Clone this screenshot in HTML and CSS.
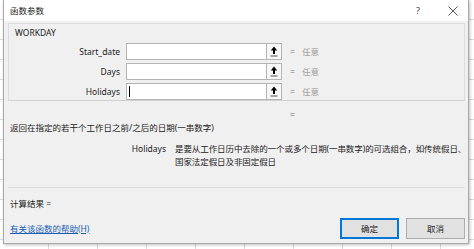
FILE: index.html
```html
<!DOCTYPE html>
<html lang="zh-CN">
<head>
<meta charset="utf-8">
<title>函数参数</title>
<link rel="stylesheet" href="styles.css">
</head>
<body>
<div class="dialog">
  <div class="titlebar">
    <span class="title">函数参数</span>
    <span class="help">?</span>
    <span class="close">
      <svg width="10" height="10" viewBox="0 0 10 10"><path d="M0.5 0.5 L9.5 9.5 M9.5 0.5 L0.5 9.5" stroke="#444" stroke-width="0.9" fill="none"/></svg>
    </span>
  </div>
  <div class="body">
    <div class="group">
      <div class="fname">WORKDAY</div>
      <div class="row">
        <span class="label">Start_date</span>
        <span class="input"></span>
        <span class="pick"><svg width="14" height="15" viewBox="0 0 14 15"><path d="M7 2.5 L10.2 6.5 L8 6.5 L8 10 L6 10 L6 6.5 L3.8 6.5 Z" fill="#000"/><rect x="3.5" y="11.5" width="7" height="1" fill="#555"/></svg></span>
        <span class="eq">=</span>
        <span class="any">任意</span>
      </div>
      <div class="row">
        <span class="label">Days</span>
        <span class="input"></span>
        <span class="pick"><svg width="14" height="15" viewBox="0 0 14 15"><path d="M7 2.5 L10.2 6.5 L8 6.5 L8 10 L6 10 L6 6.5 L3.8 6.5 Z" fill="#000"/><rect x="3.5" y="11.5" width="7" height="1" fill="#555"/></svg></span>
        <span class="eq">=</span>
        <span class="any">任意</span>
      </div>
      <div class="row">
        <span class="label">Holidays</span>
        <span class="input"><span class="caret"></span></span>
        <span class="pick"><svg width="14" height="15" viewBox="0 0 14 15"><path d="M7 2.5 L10.2 6.5 L8 6.5 L8 10 L6 10 L6 6.5 L3.8 6.5 Z" fill="#000"/><rect x="3.5" y="11.5" width="7" height="1" fill="#555"/></svg></span>
        <span class="eq">=</span>
        <span class="any">任意</span>
      </div>
    </div>
    <div class="result-eq">=</div>
    <div class="desc">返回在指定的若干个工作日之前/之后的日期(一串数字)</div>
    <div class="argdesc">
      <span class="argname">Holidays</span>
      <span class="argtext">是要从工作日历中去除的一个或多个日期(一串数字)的可选组合，如传统假日、<br>国家法定假日及非固定假日</span>
    </div>
    <div class="sep"></div>
    <div class="calc">计算结果 =</div>
    <div class="footer">
      <a class="helplink" href="#">有关该函数的帮助(H)</a>
      <div class="buttons">
        <span class="btn default">确定</span>
        <span class="btn">取消</span>
      </div>
    </div>
  </div>
</div>
</body>
</html>
```

FILE: styles.css
```css
html, body {
  margin: 0;
  padding: 0;
}
body {
  width: 474px;
  height: 249px;
  overflow: hidden;
  background-color: #ffffff;
  background-image:
    repeating-linear-gradient(to right, transparent 0, transparent 48px, #d9d9d9 48px, #d9d9d9 49px),
    repeating-linear-gradient(to bottom, transparent 0, transparent 19px, #d9d9d9 19px, #d9d9d9 20px);
  font-family: "Noto Sans", "Noto Sans CJK SC", sans-serif;
  font-size: 8.5px;
  line-height: 12px;
  color: #1a1a1a;
  padding-left: 3px;
  box-sizing: border-box;
}
.dialog {
  width: 466px;
  height: 244px;
  box-sizing: border-box;
  border: 1px solid #a9a9a9;
  border-top: none;
  background: #f0f0f0;
  display: flex;
  flex-direction: column;
  box-shadow: 1px 1px 3px rgba(0,0,0,0.25);
  overflow: hidden;
}
.titlebar {
  height: 21px;
  background: #ffffff;
  display: flex;
  align-items: center;
  padding-left: 6px;
  flex: none;
}
.title {
  flex: 1;
  color: #222;
}
.help {
  width: 12px;
  text-align: center;
  color: #444;
  margin-right: 24px;
  font-size: 9px;
}
.close {
  width: 10px;
  height: 10px;
  margin-right: 10px;
  display: flex;
}
.body {
  flex: 1;
  display: flex;
  flex-direction: column;
  padding: 2px 3px 4px 4px;
}
.group {
  border: 1px solid #dcdcdc;
  border-bottom-color: #d0d0d0;
  padding: 3px 0 0 0;
  display: flex;
  flex-direction: column;
  gap: 3px;
  flex: none;
}
.fname {
  height: 12px;
  line-height: 12px;
  padding-left: 6px;
  margin-bottom: 1px;
  color: #222;
}
.row {
  display: flex;
  align-items: center;
  height: 17px;
}
.label {
  width: 111px;
  text-align: right;
  margin-right: 6px;
  color: #222;
}
.input {
  width: 140px;
  height: 17px;
  box-sizing: border-box;
  background: #fff;
  border: 1px solid #b4b4b4;
  border-right: none;
  display: flex;
  align-items: center;
  padding-left: 2px;
}
.caret {
  width: 1px;
  height: 11px;
  background: #000;
}
.pick {
  width: 16px;
  height: 17px;
  box-sizing: border-box;
  border: 1px solid #b4b4b4;
  background: #f7f7f7;
  display: flex;
  align-items: center;
  justify-content: center;
}
.eq {
  margin-left: 8px;
  width: 8px;
  color: #777;
}
.any {
  margin-left: 4px;
  color: #a0a0a0;
}
.result-eq {
  margin-top: 8px;
  height: 12px;
  line-height: 12px;
  padding-left: 282px;
  color: #666;
  flex: none;
}
.desc {
  margin-top: 1px;
  height: 12px;
  line-height: 12px;
  padding-left: 2px;
  color: #222;
  flex: none;
}
.argdesc {
  margin-top: 8px;
  display: flex;
  line-height: 13px;
  height: 26px;
  flex: none;
}
.argname {
  width: 158px;
  text-align: right;
  margin-right: 9px;
  flex: none;
  color: #222;
}
.argtext {
  color: #222;
  white-space: nowrap;
  letter-spacing: -0.08px;
}
.sep {
  margin-top: 19px;
  height: 1px;
  background: #dddddd;
  flex: none;
}
.calc {
  margin-top: 10px;
  height: 12px;
  line-height: 12px;
  padding-left: 2px;
  color: #222;
  flex: none;
}
.footer {
  margin-top: 8px;
  display: flex;
  align-items: center;
  justify-content: space-between;
  flex: none;
}
.helplink {
  padding-left: 2px;
  color: #1a5fb4;
  text-decoration: underline;
}
.buttons {
  display: flex;
  gap: 7px;
}
.btn {
  width: 59px;
  height: 21px;
  box-sizing: border-box;
  border: 1px solid #adadad;
  background: #e1e1e1;
  display: flex;
  align-items: center;
  justify-content: center;
  color: #222;
}
.btn.default {
  border: 1px solid #0078d7;
  box-shadow: inset 0 0 0 1px #0078d7;
}
```
